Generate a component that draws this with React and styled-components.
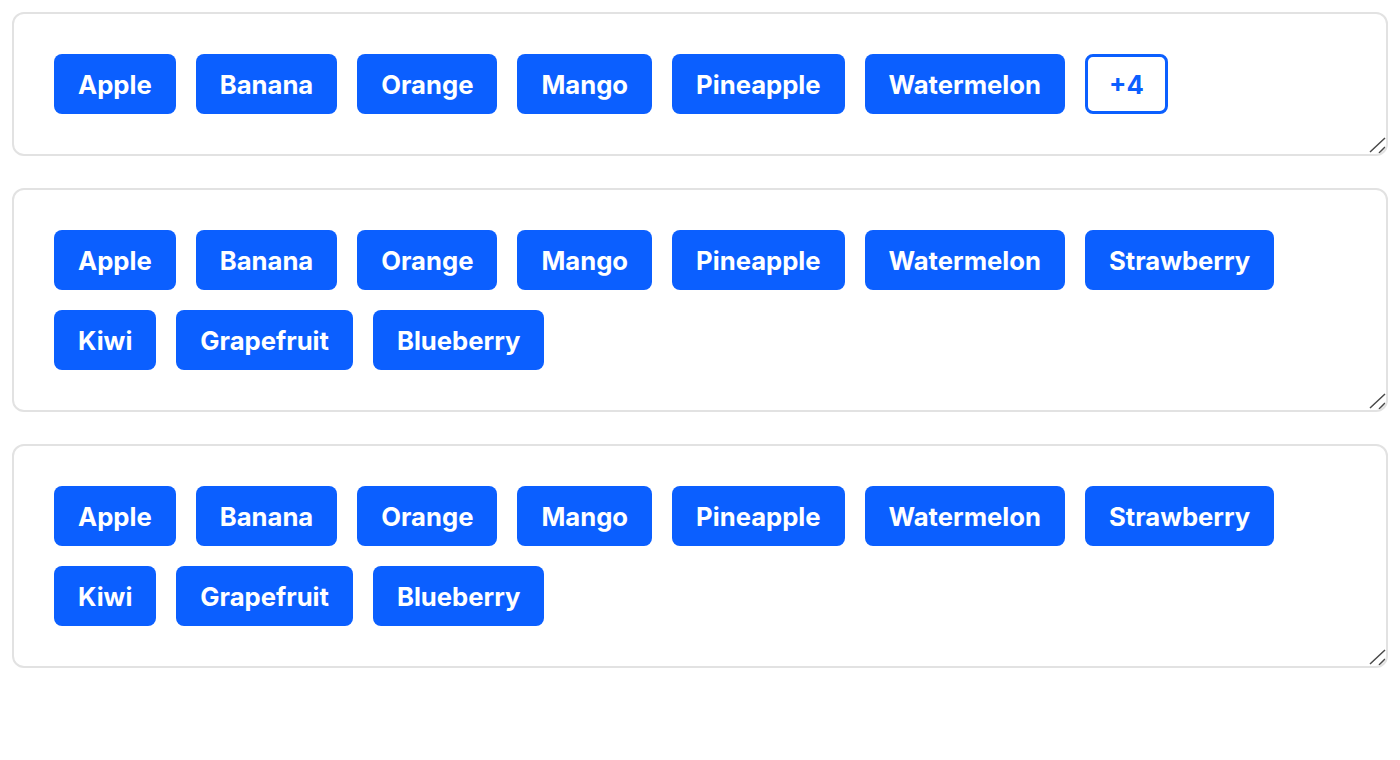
import React from "react";
import styled, { createGlobalStyle } from "styled-components";

const Global = createGlobalStyle`
  html, body { margin: 0; padding: 0; background: #ffffff; }
  body { font-family: Inter, "Noto Sans", sans-serif; }
`;

const Page = styled.div`
  display: flex;
  flex-direction: column;
  gap: 32px;
  padding: 12px;
`;

const Box = styled.div`
  position: relative;
  border: 2px solid #e2e2e2;
  border-radius: 12px;
  padding: 40px;
  resize: vertical;
  overflow: auto;
  display: flex;
  flex-wrap: wrap;
  gap: 20px;
  align-content: flex-start;
  &::-webkit-resizer {
    background: transparent;
  }
`;

const Tag = styled.span`
  display: inline-flex;
  align-items: center;
  justify-content: center;
  box-sizing: border-box;
  height: 60px;
  padding: 0 ${(p) => (p.$outline ? "21px" : "24px")};
  border-radius: 8px;
  font-family: Inter, sans-serif;
  font-weight: 700;
  font-size: 25.65px;
  background: ${(p) => (p.$outline ? "#ffffff" : "#0B5FFF")};
  color: ${(p) => (p.$outline ? "#0B5FFF" : "#ffffff")};
  border: ${(p) => (p.$outline ? "3px solid #0B5FFF" : "none")};
`;

const Grip = styled.svg`
  position: absolute;
  right: 0;
  bottom: 0;
  width: 18px;
  height: 18px;
  pointer-events: none;
`;

const Resizer = () => (
  <Grip viewBox="0 0 18 18">
    <path d="M2 16 L17 2 M11 17 L17 11" stroke="#4a4a4a" strokeWidth="1.5" fill="none" />
  </Grip>
);

const fruits = [
  "Apple",
  "Banana",
  "Orange",
  "Mango",
  "Pineapple",
  "Watermelon",
  "Strawberry",
  "Kiwi",
  "Grapefruit",
  "Blueberry",
];

export default function App() {
  return (
    <Page>
      <Global />
      <Box>
        {fruits.slice(0, 6).map((f) => (
          <Tag key={f}>{f}</Tag>
        ))}
        <Tag $outline>+{fruits.length - 6}</Tag>
        <Resizer />
      </Box>
      <Box>
        {fruits.map((f) => (
          <Tag key={f}>{f}</Tag>
        ))}
        <Resizer />
      </Box>
      <Box>
        {fruits.map((f) => (
          <Tag key={f}>{f}</Tag>
        ))}
        <Resizer />
      </Box>
    </Page>
  );
}
